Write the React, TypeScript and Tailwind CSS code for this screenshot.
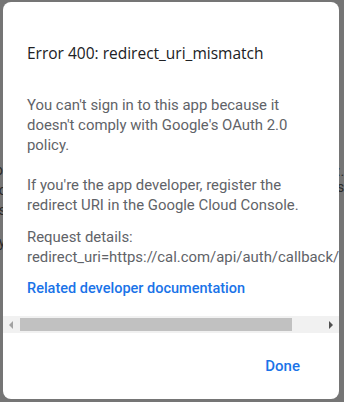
import React from "react";

const font = { fontFamily: "Roboto, 'Liberation Sans', sans-serif" };

export default function App() {
  return (
    <div className="relative w-[344px] h-[402px] overflow-hidden bg-[#757575]" style={font}>
      {/* page text showing under the scrim */}
      <div className="absolute left-[-9px] top-[160px] flex flex-col text-[14px] leading-[20px] text-[#2a2a2a] text-right w-[12px]">
        <span>lo</span>
        <span>po</span>
        <span>ns</span>
        <span className="mt-[12px]">ny</span>
      </div>
      <div className="absolute left-[337px] top-[163px] flex flex-col text-[14px] leading-[16px] text-[#2a2a2a]">
        <span>:..</span>
        <span>se</span>
      </div>

      <div className="relative ml-[3px] pt-[2px]">
        <div className="w-[336px] h-[397px] bg-white rounded-[8px] overflow-hidden flex flex-col">
          <div className="overflow-hidden pt-[39px] pl-[24px]">
            <div className="w-[288px]">
              <h1
                className="text-[15.5px] leading-[24px] text-[#202124] whitespace-nowrap"
                style={{ fontFamily: "'Open Sans', Roboto, sans-serif" }}
              >
                Error 400: redirect_uri_mismatch
              </h1>
              <div className="mt-[30px] text-[14.9px] leading-[20px] text-[#5f6368]">
                <p>
                  You can't sign in to this app because it doesn't comply with
                  Google's OAuth 2.0 policy.
                </p>
                <p className="mt-[20px]">
                  If you're the app developer, register the redirect URI in the
                  Google Cloud Console.
                </p>
                <p className="mt-[12px] whitespace-nowrap">
                  Request details:
                  <br />
                  redirect_uri=https://cal.com/api/auth/callback/google
                </p>
                <a className="block mt-[12px] text-[14.5px] text-[#1a73e8] font-medium whitespace-nowrap">
                  Related developer documentation
                </a>
              </div>
            </div>
          </div>

          {/* horizontal scrollbar */}
          <div className="mt-[17px] h-[17px] bg-[#f1f1f1] flex items-center">
            <div className="w-[16px] flex justify-center">
              <div className="w-0 h-0 border-y-[4px] border-y-transparent border-r-[4px] border-r-[#a3a3a3]" />
            </div>
            <div className="flex-1 h-[13px] pr-[31px]">
              <div className="ml-[1px] h-full bg-[#c1c1c1]" />
            </div>
            <div className="w-[16px] flex justify-center">
              <div className="w-0 h-0 border-y-[4px] border-y-transparent border-l-[4px] border-l-[#505050]" />
            </div>
          </div>

          <div className="flex justify-end pr-[31px] mt-[15px]">
            <button className="h-[36px] px-[8px] text-[15px] font-medium text-[#1a73e8]">
              Done
            </button>
          </div>
        </div>
      </div>
    </div>
  );
}
